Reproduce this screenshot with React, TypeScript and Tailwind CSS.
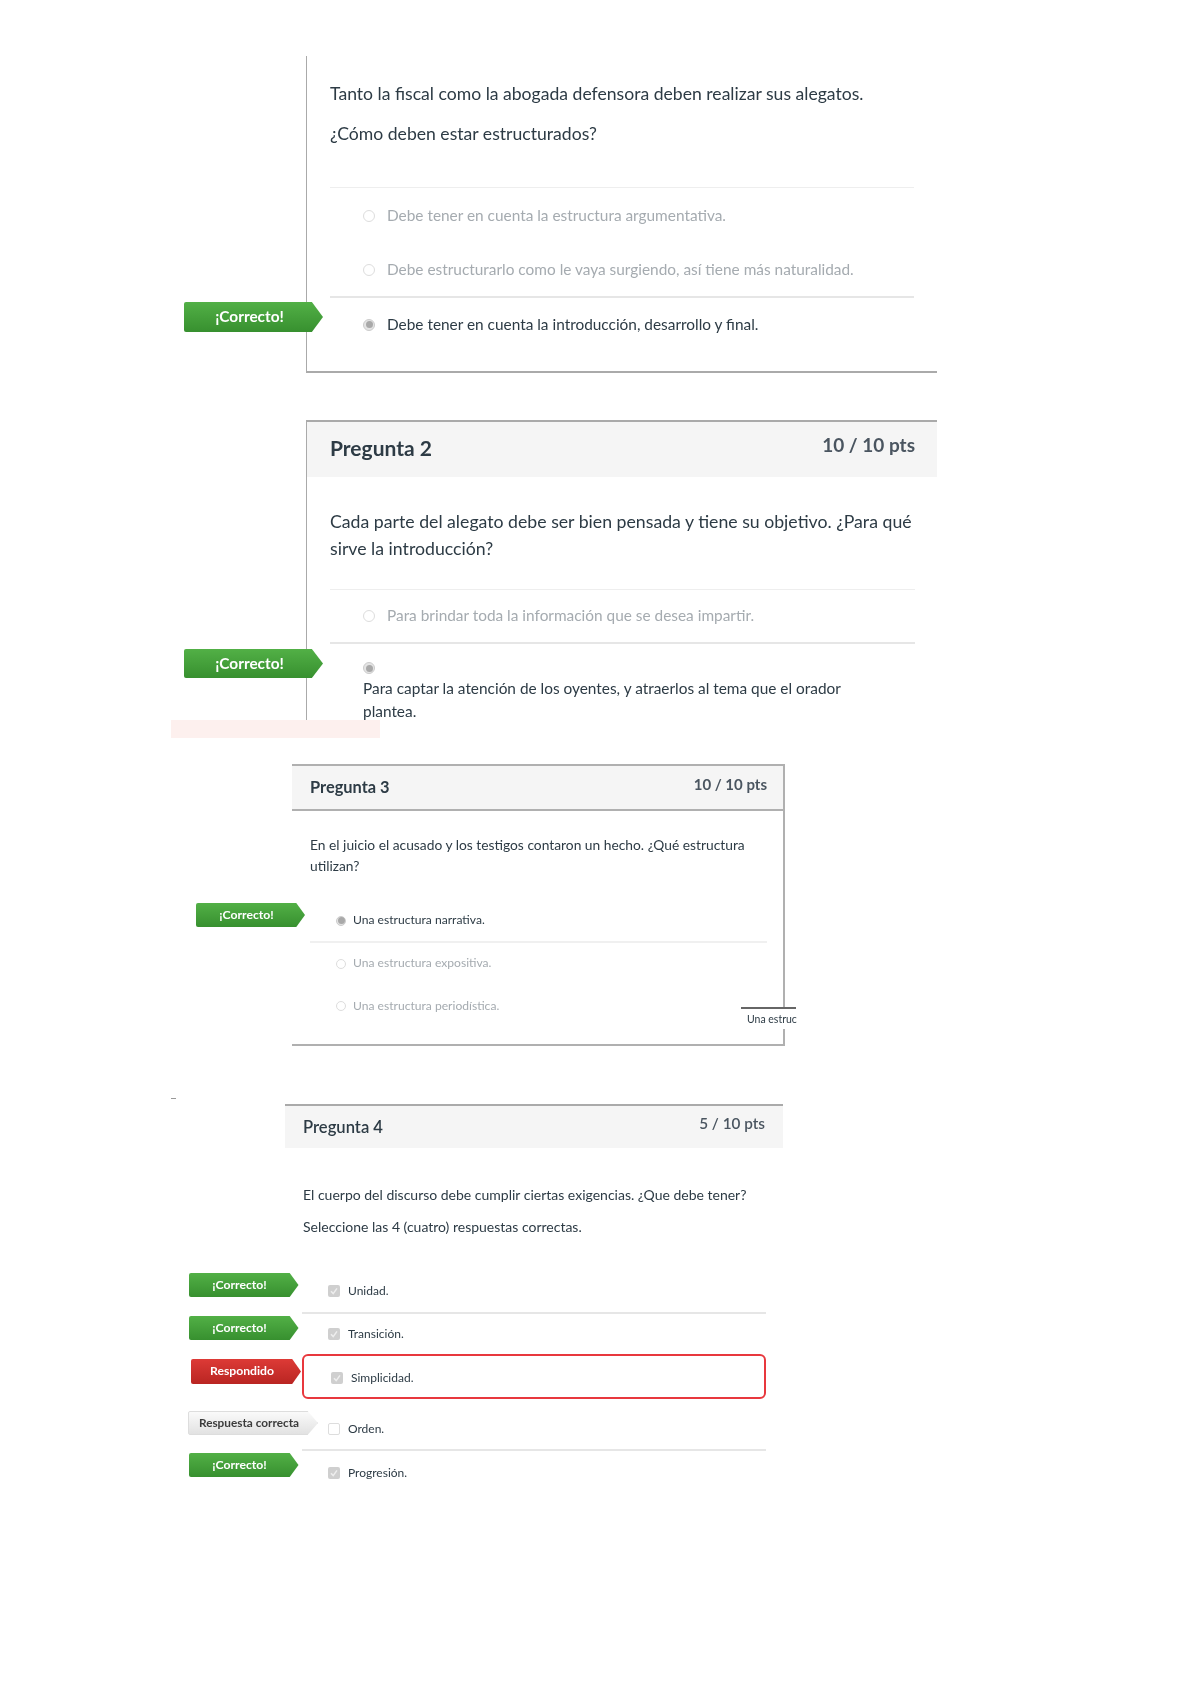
import React from 'react';

type Tone = 'green' | 'red' | 'gray';

const toneClass: Record<Tone, string> = {
  green: 'bg-gradient-to-b from-[#52b046] to-[#37902f] text-white',
  red: 'bg-gradient-to-b from-[#dd3a36] to-[#b92522] text-white',
  gray: 'bg-gradient-to-b from-[#fafafa] to-[#e2e2e2] text-[#3b3b3b]',
};

const Badge: React.FC<{ label: string; tone?: Tone; className: string }> = ({ label, tone = 'green', className }) => (
  <div
    className={`absolute flex items-center justify-center pr-2 rounded-l-[2px] [clip-path:polygon(0_0,92%_0,100%_50%,92%_100%,0_100%)] ${toneClass[tone]} ${className}`}
  >
    {label}
  </div>
);

const Radio: React.FC<{ selected?: boolean; className?: string }> = ({ selected, className = 'w-3 h-3' }) => (
  <span
    className={`shrink-0 rounded-full border flex items-center justify-center ${selected ? 'border-[#ccc] bg-[#e4e4e4]' : 'border-[#ddd] bg-white'} ${className}`}
  >
    {selected && <span className="w-[7px] h-[7px] rounded-full bg-[#a9a9a9]" />}
  </span>
);

const Checkbox: React.FC<{ checked?: boolean }> = ({ checked = true }) => (
  <span
    className={`shrink-0 w-3 h-3 rounded-[2px] flex items-center justify-center ${checked ? 'bg-[#cfcfcf]' : 'bg-white border border-[#ddd]'}`}
  >
    {checked && (
      <svg viewBox="0 0 12 12" className="w-3 h-3" fill="none" stroke="#eee" strokeWidth="1.5">
        <path d="M3 6.2 5.2 8.6 9 3.4" />
      </svg>
    )}
  </span>
);

const Header: React.FC<{ title: string; pts: string; className: string; titleClass: string; ptsClass: string }> = ({
  title,
  pts,
  className,
  titleClass,
  ptsClass,
}) => (
  <div className={`flex justify-between bg-[#f5f5f5] ${className}`}>
    <h2 className={`text-[#2d3b45] ${titleClass}`}>{title}</h2>
    <span className={`text-[#4a5560] ${ptsClass}`}>{pts}</span>
  </div>
);

export default function App() {
  return (
    <div className="w-[1200px] h-[1698px] bg-white overflow-hidden pt-[56px] font-['Lato','Open_Sans',sans-serif] text-[#2d3b45] blur-[0.5px]">
      {/* Pregunta 1, continued from the previous page */}
      <section className="ml-[306px] w-[631px] h-[317px] border-l border-b-2 border-[#aaa] px-[23px] pt-[26px]">
        <p className="text-[17.6px] leading-[24px]">Tanto la fiscal como la abogada defensora deben realizar sus alegatos.</p>
        <p className="text-[17.6px] leading-[24px] mt-4">¿Cómo deben estar estructurados?</p>
        <div className="mt-[41px] border-t border-[#eee]">
          <div className="h-[56px] flex items-center gap-3 pl-[33px] text-[15.4px] text-[#a5abb0]">
            <Radio />
            <span>Debe tener en cuenta la estructura argumentativa.</span>
          </div>
          <div className="h-[54px] flex items-center gap-3 pl-[33px] text-[15.4px] text-[#a5abb0] border-b-2 border-[#e6e6e6]">
            <Radio />
            <span>Debe estructurarlo como le vaya surgiendo, así tiene más naturalidad.</span>
          </div>
          <div className="relative h-[53px] flex items-center gap-3 pl-[33px] text-[15.4px]">
            <Badge label="¡Correcto!" className="left-[-146px] top-[4px] w-[139px] h-[30px] text-[15.4px] font-bold" />
            <Radio selected />
            <span>Debe tener en cuenta la introducción, desarrollo y final.</span>
          </div>
        </div>
      </section>

      {/* Pregunta 2 */}
      <section className="ml-[306px] mt-[47px] w-[631px] h-[300px] border-l border-t-2 border-[#aaa]">
        <Header
          title="Pregunta 2"
          pts="10 / 10 pts"
          className="h-[55px] pl-[23px] pr-[22px]"
          titleClass="text-[21px] leading-[28px] font-bold pt-[12px] h-[42px]"
          ptsClass="text-[19px] font-bold pt-[9px]"
        />
        <div className="px-[23px] pr-[22px] pt-[31px]">
          <p className="text-[17.7px] leading-[27px]">
            Cada parte del alegato debe ser bien pensada y tiene su objetivo. ¿Para qué sirve la introducción?
          </p>
          <div className="mt-[27px] border-t border-[#eee]">
            <div className="h-[54px] flex items-center gap-3 pl-[33px] text-[15.4px] text-[#a5abb0] border-b-2 border-[#e6e6e6]">
              <Radio />
              <span>Para brindar toda la información que se desea impartir.</span>
            </div>
            <div className="relative pl-[33px] pt-[18px] text-[15.4px]">
              <Badge label="¡Correcto!" className="left-[-146px] top-[5px] w-[139px] h-[29px] text-[15.4px] font-bold" />
              <Radio selected />
              <p className="w-[500px] leading-[23px] mt-[3px]">
                Para captar la atención de los oyentes, y atraerlos al tema que el orador plantea.
              </p>
            </div>
          </div>
        </div>
      </section>
      <div className="relative ml-[171px] w-[209px] h-[18px] bg-[#fdf0ee]" />

      {/* Pregunta 3 */}
      <section className="relative ml-[292px] mt-[26px] w-[493px] h-[282px] border-t-2 border-r-2 border-b-2 border-[#b0b0b0]">
        <Header
          title="Pregunta 3"
          pts="10 / 10 pts"
          className="h-[45px] pl-[18px] pr-[16px] border-b-2 border-[#b0b0b0]"
          titleClass="text-[16.4px] font-bold leading-[24px] pt-[9px]"
          ptsClass="text-[15px] font-bold pt-[7px]"
        />
        <div className="pl-[18px] pr-[16px] pt-[23px]">
          <p className="text-[13.8px] leading-[21px]">
            En el juicio el acusado y los testigos contaron un hecho. ¿Qué estructura utilizan?
          </p>
          <div className="mt-[24px]">
            <div className="relative h-[43px] flex items-center gap-[7px] pl-[26px] text-[12.1px] border-b-2 border-[#f0f0f0]">
              <Badge label="¡Correcto!" className="left-[-114px] top-[3px] w-[109px] h-[24px] text-[12.2px] font-bold" />
              <Radio selected className="w-[10px] h-[10px]" />
              <span>Una estructura narrativa.</span>
            </div>
            <div className="h-[41px] flex items-center gap-[7px] pl-[26px] text-[12.1px] text-[#a5abb0]">
              <Radio className="w-[10px] h-[10px]" />
              <span>Una estructura expositiva.</span>
            </div>
            <div className="h-[44px] flex items-center gap-[7px] pl-[26px] text-[12.1px] text-[#a5abb0]">
              <Radio className="w-[10px] h-[10px]" />
              <span>Una estructura periodística.</span>
            </div>
          </div>
        </div>
        <div className="absolute left-[449px] top-[241px] w-[55px] h-[22px] bg-white border-t-2 border-[#666] whitespace-nowrap pl-[6px] text-[10.5px] leading-[20px]">
          Una estruc
        </div>
      </section>

      <div className="ml-[171px] mt-[52px] w-[5px] h-px bg-[#999]" />

      {/* Pregunta 4 */}
      <section className="ml-[285px] mt-[5px] w-[498px] border-t-2 border-[#aaa]">
        <Header
          title="Pregunta 4"
          pts="5 / 10 pts"
          className="h-[42px] pl-[18px] pr-[18px]"
          titleClass="text-[16.6px] font-semibold leading-[24px] pt-[9px]"
          ptsClass="text-[15.3px] font-semibold pt-[6px]"
        />
        <div className="px-[18px] pt-[37px]">
          <p className="text-[14px] leading-[20px]">El cuerpo del discurso debe cumplir ciertas exigencias. ¿Que debe tener?</p>
          <p className="text-[14px] leading-[20px] mt-3">Seleccione las 4 (cuatro) respuestas correctas.</p>
        </div>
        <div className="mx-[17px] mt-[32px] text-[12px]">
          <div className="relative h-[45px] flex items-center gap-2 pl-[26px] pt-[1px] border-b-2 border-[#e6e6e6]">
            <Badge label="¡Correcto!" className="left-[-113.5px] top-[4px] w-[110px] h-[24px] text-[12.2px] font-bold" />
            <Checkbox />
            <span>Unidad.</span>
          </div>
          <div className="relative h-[40px] flex items-center gap-2 pl-[26px]">
            <Badge label="¡Correcto!" className="left-[-113.5px] top-[2px] w-[110px] h-[24px] text-[12.2px] font-bold" />
            <Checkbox />
            <span>Transición.</span>
          </div>
          <div className="relative h-[45px] flex items-center gap-2 pl-[27px] pt-[2px] border-2 border-[#e8383d] rounded-md">
            <Badge label="Respondido" tone="red" className="left-[-113px] top-[3px] w-[110px] h-[25px] text-[12.2px] font-bold" />
            <Checkbox />
            <span>Simplicidad.</span>
          </div>
          <div className="relative h-[52px] flex items-center gap-2 pl-[26px] pt-[10px] border-b-2 border-[#e6e6e6]">
            <Badge label="Respuesta correcta" tone="gray" className="left-[-114px] top-[12px] w-[130px] h-[24px] text-[11.8px] font-bold border border-[#ddd]" />
            <Checkbox checked={false} />
            <span>Orden.</span>
          </div>
          <div className="relative h-[43px] flex items-center gap-2 pl-[26px]">
            <Badge label="¡Correcto!" className="left-[-113.5px] top-[2px] w-[110px] h-[24px] text-[12.2px] font-bold" />
            <Checkbox />
            <span>Progresión.</span>
          </div>
        </div>
      </section>
    </div>
  );
}
